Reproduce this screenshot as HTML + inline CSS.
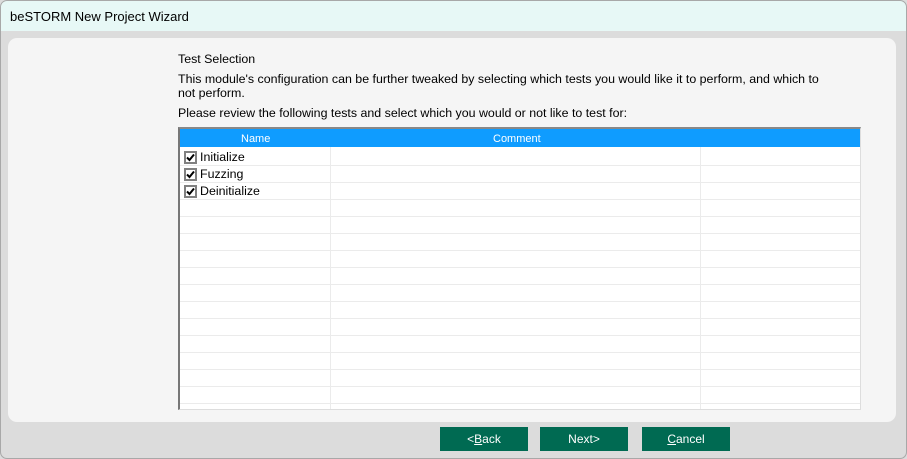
<!DOCTYPE html>
<html><head><style>
*{margin:0;padding:0;box-sizing:border-box}
body{width:907px;height:459px;background:#dcdcdc;font-family:"Liberation Sans",sans-serif;position:relative;overflow:hidden}
.frame{position:absolute;left:0;top:0;width:907px;height:459px;border:1px solid #a8a8a8;border-radius:7px;pointer-events:none}
.title{position:absolute;left:0;top:0;width:907px;height:31px;background:#e7f8f6;font-size:13px;color:#000;padding:9px 0 0 10px;border-radius:7px 7px 0 0}
.panel{position:absolute;left:8px;top:38px;width:888px;height:384px;background:#f5f5f5;border-radius:9px}
.t{position:absolute;left:178px;font-size:12.4px;color:#000}
.grid{position:absolute;left:178px;top:127px;width:683px;height:283px;background:#fff;border-top:2px solid #888;border-left:2px solid #777;border-bottom:1px solid #ddd;border-right:1px solid #ddd;overflow:hidden}
.hdr{position:absolute;left:0;top:0;width:681px;height:18px;background:#0f9cff;color:#fff;font-size:11px}
.hdr span{position:absolute;top:4px}
.row{position:absolute;left:0;width:681px;height:17px;border-bottom:1px solid #ebebeb}
.vl{position:absolute;top:18px;bottom:0;width:1px;background:#ebebeb}
.cb{position:absolute;left:4px;top:2px;width:13px;height:13px;border:2px solid #808080;background:#fff}
.cb svg{position:absolute;left:0;top:0}
.lbl{position:absolute;left:20px;top:1px;font-size:12.4px}
.btn{position:absolute;top:427px;width:88px;height:24px;background:#006a52;color:#fff;font-size:12px;text-align:center;line-height:24px}
</style></head><body>
<div class="title">beSTORM New Project Wizard</div>
<div class="panel"></div>
<div class="t" style="top:52px">Test Selection</div>
<div class="t" style="top:72px;width:655px;line-height:14px">This module's configuration can be further tweaked by selecting which tests you would like it to perform, and which to<br>not perform.</div>
<div class="t" style="top:106px">Please review the following tests and select which you would or not like to test for:</div>
<div class="grid">
<div class="hdr"><span style="left:61px">Name</span><span style="left:313px">Comment</span></div>
<div class="vl" style="left:150px"></div>
<div class="vl" style="left:520px"></div>
<div class="row" style="top:20px"><div class="cb"><svg width="9" height="9" viewBox="0 0 9 9"><path d="M1 4.5 L3.5 7 L8 1.5" stroke="#000" stroke-width="2" fill="none"/></svg></div><div class="lbl">Initialize</div></div>
<div class="row" style="top:37px"><div class="cb"><svg width="9" height="9" viewBox="0 0 9 9"><path d="M1 4.5 L3.5 7 L8 1.5" stroke="#000" stroke-width="2" fill="none"/></svg></div><div class="lbl">Fuzzing</div></div>
<div class="row" style="top:54px"><div class="cb"><svg width="9" height="9" viewBox="0 0 9 9"><path d="M1 4.5 L3.5 7 L8 1.5" stroke="#000" stroke-width="2" fill="none"/></svg></div><div class="lbl">Deinitialize</div></div>
<div class="row" style="top:71px"></div><div class="row" style="top:88px"></div><div class="row" style="top:105px"></div><div class="row" style="top:122px"></div><div class="row" style="top:139px"></div><div class="row" style="top:156px"></div><div class="row" style="top:173px"></div><div class="row" style="top:190px"></div><div class="row" style="top:207px"></div><div class="row" style="top:224px"></div><div class="row" style="top:241px"></div><div class="row" style="top:258px"></div>
</div>
<div class="btn" style="left:440px">&lt;<u>B</u>ack</div>
<div class="btn" style="left:540px">Next&gt;</div>
<div class="btn" style="left:642px"><u>C</u>ancel</div>
<div class="frame"></div>
</body></html>
